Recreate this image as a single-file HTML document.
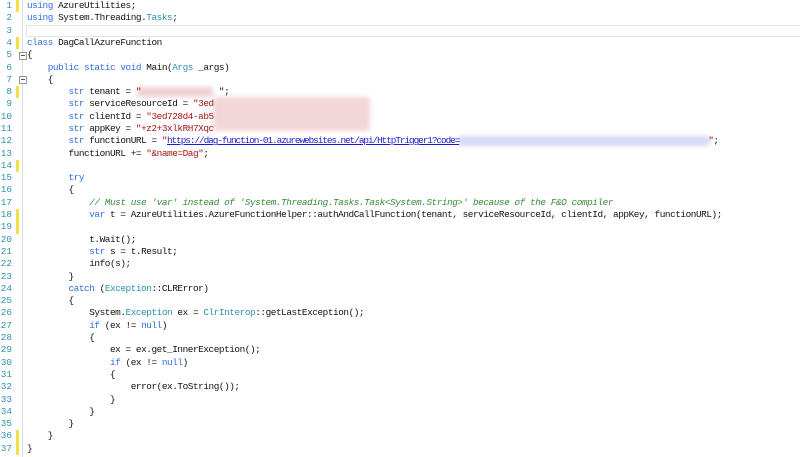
<!DOCTYPE html>
<html><head><style>
body{margin:0;width:800px;height:457px;background:#fff;overflow:hidden;position:relative;font-family:"Liberation Mono",monospace;font-size:9.4px;letter-spacing:-0.44px;color:#111}
.l{position:absolute;left:0;height:12.3px;line-height:12.3px;width:800px;white-space:pre}
.n{position:absolute;left:0;width:12px;text-align:right;color:#2b91af;letter-spacing:0}
.c{position:absolute;left:27px}
.k{color:#2f6fe0}.t{color:#2b91af}.s{color:#a31515}.g{color:#3a8a3a;font-style:italic}.u{color:#1a1ad0;text-decoration:underline;letter-spacing:-1.06px}
.y{position:absolute;left:16px;width:3px;height:12.3px;background:#f2e24a}
.bl{position:absolute;height:10px;filter:blur(2.5px);border-radius:3px}
</style></head><body>
<div style="position:absolute;left:22px;top:0;width:1px;height:457px;background:#ddd"></div>
<div style="position:absolute;left:26px;top:25px;width:774px;height:10px;border:1px solid #e4e4e4"></div>
<div class="y" style="top:0"></div><div class="y" style="top:36.9px"></div><div class="y" style="top:86px"></div><div class="y" style="top:159.9px"></div><div class="y" style="top:209px;height:24.6px"></div><div class="y" style="top:430px;height:24.6px"></div>
<div style="position:absolute;left:19px;top:51.5px;width:6px;height:6px;border:1px solid #999;background:#fff"></div><div style="position:absolute;left:21px;top:54.5px;width:4px;height:1px;background:#555"></div>
<div style="position:absolute;left:19px;top:76px;width:6px;height:6px;border:1px solid #999;background:#fff"></div><div style="position:absolute;left:21px;top:79px;width:4px;height:1px;background:#555"></div>
<div class="bl" style="left:137px;top:87px;width:76px;background:#f0d0d2"></div>
<div class="bl" style="left:213px;top:97px;width:157px;height:34px;background:#f3d6d8"></div>
<div class="bl" style="left:458px;top:136px;width:252px;background:#d6d8f8"></div>
<div class="l" style="top:0"><span class="n">1</span><span class="c"><span class="k">using</span> AzureUtilities;</span></div>
<div class="l" style="top:12.3px"><span class="n">2</span><span class="c"><span class="k">using</span> System.Threading.<span class="t">Tasks</span>;</span></div>
<div class="l" style="top:24.6px"><span class="n">3</span></div>
<div class="l" style="top:36.9px"><span class="n">4</span><span class="c"><span class="k">class</span> DagCallAzureFunction</span></div>
<div class="l" style="top:49.2px"><span class="n">5</span><span class="c">{</span></div>
<div class="l" style="top:61.5px"><span class="n">6</span><span class="c">    <span class="k">public static void</span> Main(<span class="t">Args</span> _args)</span></div>
<div class="l" style="top:73.8px"><span class="n">7</span><span class="c">    {</span></div>
<div class="l" style="top:86px"><span class="n">8</span><span class="c">        <span class="k">str</span> tenant = <span class="s">"               </span>";</span></div>
<div class="l" style="top:98.3px"><span class="n">9</span><span class="c">        <span class="k">str</span> serviceResourceId = <span class="s">"3ed</span></span></div>
<div class="l" style="top:110.6px"><span class="n">10</span><span class="c">        <span class="k">str</span> clientId = <span class="s">"3ed728d4-ab5</span></span></div>
<div class="l" style="top:122.9px"><span class="n">11</span><span class="c">        <span class="k">str</span> appKey = <span class="s">"+z2+3xlkRH7Xqc</span></span></div>
<div class="l" style="top:135.2px"><span class="n">12</span><span class="c">        <span class="k">str</span> functionURL = <span class="s">"</span><span class="u">https://dag-function-01.azurewebsites.net/api/HttpTrigger1?code=</span>                                                <span class="s">"</span>;</span></div>
<div class="l" style="top:147.5px"><span class="n">13</span><span class="c">        functionURL += <span class="s">"&amp;name=Dag"</span>;</span></div>
<div class="l" style="top:159.8px"><span class="n">14</span></div>
<div class="l" style="top:172.1px"><span class="n">15</span><span class="c">        <span class="k">try</span></span></div>
<div class="l" style="top:184.4px"><span class="n">16</span><span class="c">        {</span></div>
<div class="l" style="top:196.7px"><span class="n">17</span><span class="c">            <span class="g">// Must use 'var' instead of 'System.Threading.Tasks.Task&lt;System.String&gt;' because of the F&amp;O compiler</span></span></div>
<div class="l" style="top:209px"><span class="n">18</span><span class="c">            <span class="k">var</span> t = AzureUtilities.AzureFunctionHelper::authAndCallFunction(tenant, serviceResourceId, clientId, appKey, functionURL);</span></div>
<div class="l" style="top:221.3px"><span class="n">19</span></div>
<div class="l" style="top:233.6px"><span class="n">20</span><span class="c">            t.Wait();</span></div>
<div class="l" style="top:245.9px"><span class="n">21</span><span class="c">            <span class="k">str</span> s = t.Result;</span></div>
<div class="l" style="top:258.2px"><span class="n">22</span><span class="c">            info(s);</span></div>
<div class="l" style="top:270.5px"><span class="n">23</span><span class="c">        }</span></div>
<div class="l" style="top:282.8px"><span class="n">24</span><span class="c">        <span class="k">catch</span> (<span class="t">Exception</span>::CLRError)</span></div>
<div class="l" style="top:295.1px"><span class="n">25</span><span class="c">        {</span></div>
<div class="l" style="top:307.4px"><span class="n">26</span><span class="c">            System.<span class="t">Exception</span> ex = <span class="t">ClrInterop</span>::getLastException();</span></div>
<div class="l" style="top:319.7px"><span class="n">27</span><span class="c">            <span class="k">if</span> (ex != <span class="k">null</span>)</span></div>
<div class="l" style="top:332px"><span class="n">28</span><span class="c">            {</span></div>
<div class="l" style="top:344.3px"><span class="n">29</span><span class="c">                ex = ex.get_InnerException();</span></div>
<div class="l" style="top:356.6px"><span class="n">30</span><span class="c">                <span class="k">if</span> (ex != <span class="k">null</span>)</span></div>
<div class="l" style="top:368.9px"><span class="n">31</span><span class="c">                {</span></div>
<div class="l" style="top:381.2px"><span class="n">32</span><span class="c">                    error(ex.ToString());</span></div>
<div class="l" style="top:393.5px"><span class="n">33</span><span class="c">                }</span></div>
<div class="l" style="top:405.8px"><span class="n">34</span><span class="c">            }</span></div>
<div class="l" style="top:418.1px"><span class="n">35</span><span class="c">        }</span></div>
<div class="l" style="top:430.4px"><span class="n">36</span><span class="c">    }</span></div>
<div class="l" style="top:442.7px"><span class="n">37</span><span class="c">}</span></div>
</body></html>
